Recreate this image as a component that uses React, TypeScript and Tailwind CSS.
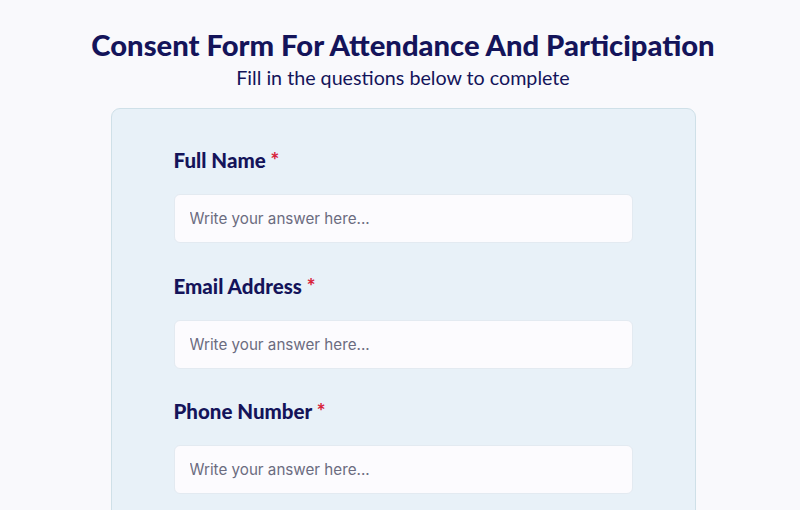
const fields = ['Full Name', 'Email Address', 'Phone Number'];

const Field = ({ label }: { label: string }) => (
  <div className="flex flex-col">
    <label className="font-['Lato',sans-serif] text-[20.5px] leading-[28px] font-black text-[#14145a]">
      {label} <span className="text-[#d8233a]">*</span>
    </label>
    <input
      type="text"
      placeholder="Write your answer here..."
      className="mt-[20px] h-[49px] w-full rounded-[6px] border border-[#e3eaf1] bg-[#fcfbfe] px-[15px] font-['Inter',sans-serif] text-[15.2px] text-[#14145a] outline-none placeholder:text-[#6b6c80]"
    />
  </div>
);

export default function App() {
  return (
    <div className="h-[510px] overflow-hidden bg-[#f9f9fc] pl-[6px] pt-[26px]">
      <div className="flex flex-col items-center font-['Lato',sans-serif] text-[#14145a]">
        <h1 className="text-[29.2px] leading-[38px] font-black">Consent Form For Attendance And Participation</h1>
        <p className="text-[19.7px] leading-[28px]">Fill in the questions below to complete</p>
      </div>
      <div className="mx-auto mt-[16px] flex w-[585px] flex-col gap-[28.5px] rounded-[9px] border border-[#cfe0e8] bg-[#e8f1f8] px-[62px] pt-[37px] pb-[40px]">
        {fields.map((f) => (
          <Field key={f} label={f} />
        ))}
      </div>
    </div>
  );
}
